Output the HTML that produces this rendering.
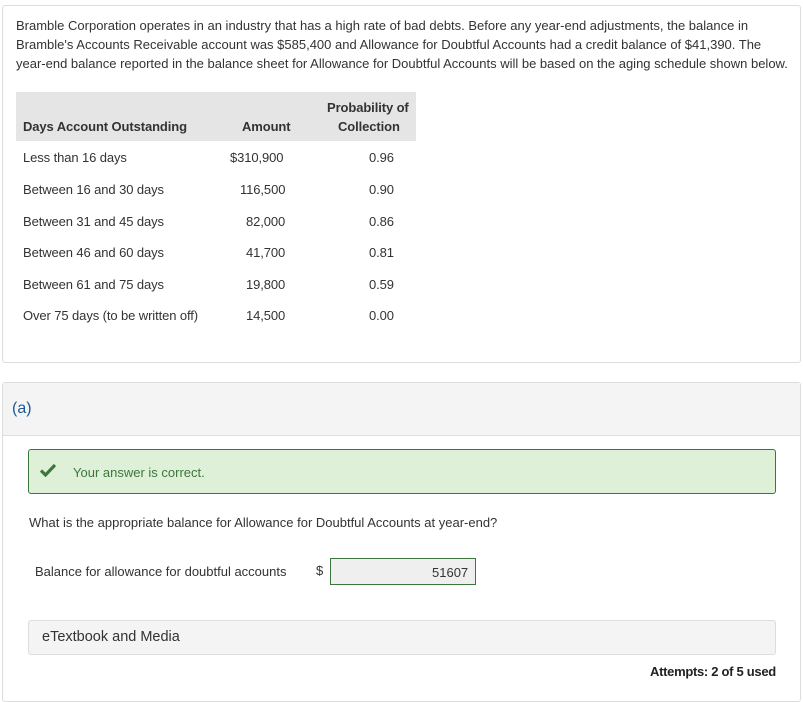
<!DOCTYPE html>
<html><head><meta charset="utf-8"><style>
*{margin:0;padding:0;box-sizing:border-box}
body{width:803px;height:693px;background:#fff;font-family:"Liberation Sans",sans-serif;color:#333;font-size:13px;position:relative;overflow:hidden}
.a{position:absolute;white-space:nowrap}
.p1{position:absolute;left:2px;top:5px;width:799px;height:358px;border:1px solid #ddd;border-radius:3px}
.t{letter-spacing:-0.1px}
.hd{position:absolute;left:16px;top:92px;width:400px;height:49px;background:#e5e5e5}
.b{font-weight:bold}
.p2{position:absolute;left:2px;top:382px;width:799px;height:320px;border:1px solid #ddd;border-radius:3px}
.p2h{position:absolute;left:0;top:0;width:797px;height:53px;background:#f4f4f4;border-bottom:1px solid #ddd}
</style></head><body>
<div class="p1"></div>
<div class="a" style="left:16px;top:18px">Bramble Corporation operates in an industry that has a high rate of bad debts. Before any year-end adjustments, the balance in</div>
<div class="a" style="left:16px;top:37px">Bramble's Accounts Receivable account was $585,400 and Allowance for Doubtful Accounts had a credit balance of $41,390. The</div>
<div class="a" style="left:16px;top:56px">year-end balance reported in the balance sheet for Allowance for Doubtful Accounts will be based on the aging schedule shown below.</div>
<div class="hd"></div>
<div class="a b t" style="left:23px;top:119px">Days Account Outstanding</div>
<div class="a b t" style="left:242px;top:119px">Amount</div>
<div class="a b t" style="left:327px;top:100px">Probability of</div>
<div class="a b t" style="left:338px;top:119px">Collection</div>
<div class="a t" style="left:23px;top:150px">Less than 16 days</div><div class="a t" style="left:230px;top:150px">$310,900</div><div class="a t" style="left:369px;top:150px">0.96</div>
<div class="a t" style="left:23px;top:182px">Between 16 and 30 days</div><div class="a t" style="left:240px;top:182px">116,500</div><div class="a t" style="left:369px;top:182px">0.90</div>
<div class="a t" style="left:23px;top:214px">Between 31 and 45 days</div><div class="a t" style="left:246px;top:214px">82,000</div><div class="a t" style="left:369px;top:214px">0.86</div>
<div class="a t" style="left:23px;top:245px">Between 46 and 60 days</div><div class="a t" style="left:246px;top:245px">41,700</div><div class="a t" style="left:369px;top:245px">0.81</div>
<div class="a t" style="left:23px;top:277px">Between 61 and 75 days</div><div class="a t" style="left:246px;top:277px">19,800</div><div class="a t" style="left:369px;top:277px">0.59</div>
<div class="a t" style="left:23px;top:308px">Over 75 days (to be written off)</div><div class="a t" style="left:246px;top:308px">14,500</div><div class="a t" style="left:369px;top:308px">0.00</div>

<div class="p2"><div class="p2h"></div></div>
<div class="a" style="left:12px;top:400px;font-size:16px;color:#1a5a96">(a)</div>
<div class="a" style="left:28px;top:449px;width:748px;height:45px;background:#dff0d8;border:1px solid #3c763d;border-radius:3px"></div>
<svg class="a" style="left:40px;top:463px" width="16" height="14" viewBox="0 0 16 14"><path d="M1 7.5 L5.5 12 L15 2" stroke="#3c763d" stroke-width="3.2" fill="none"/></svg>
<div class="a" style="left:73px;top:465px;color:#3c763d">Your answer is correct.</div>
<div class="a" style="left:29px;top:515px">What is the appropriate balance for Allowance for Doubtful Accounts at year-end?</div>
<div class="a" style="left:35px;top:564px">Balance for allowance for doubtful accounts</div>
<div class="a" style="left:316px;top:563px">$</div>
<div class="a" style="left:330px;top:558px;width:146px;height:27px;background:#efefef;border:1px solid #3c763d"></div>
<div class="a" style="left:432px;top:565px">51607</div>
<div class="a" style="left:28px;top:620px;width:748px;height:35px;background:#f4f4f4;border:1px solid #ddd;border-radius:3px"></div>
<div class="a" style="left:42px;top:629px;font-size:14.5px">eTextbook and Media</div>
<div class="a b" style="left:650px;top:664px;color:#222;letter-spacing:-0.3px">Attempts: 2 of 5 used</div>
</body></html>
